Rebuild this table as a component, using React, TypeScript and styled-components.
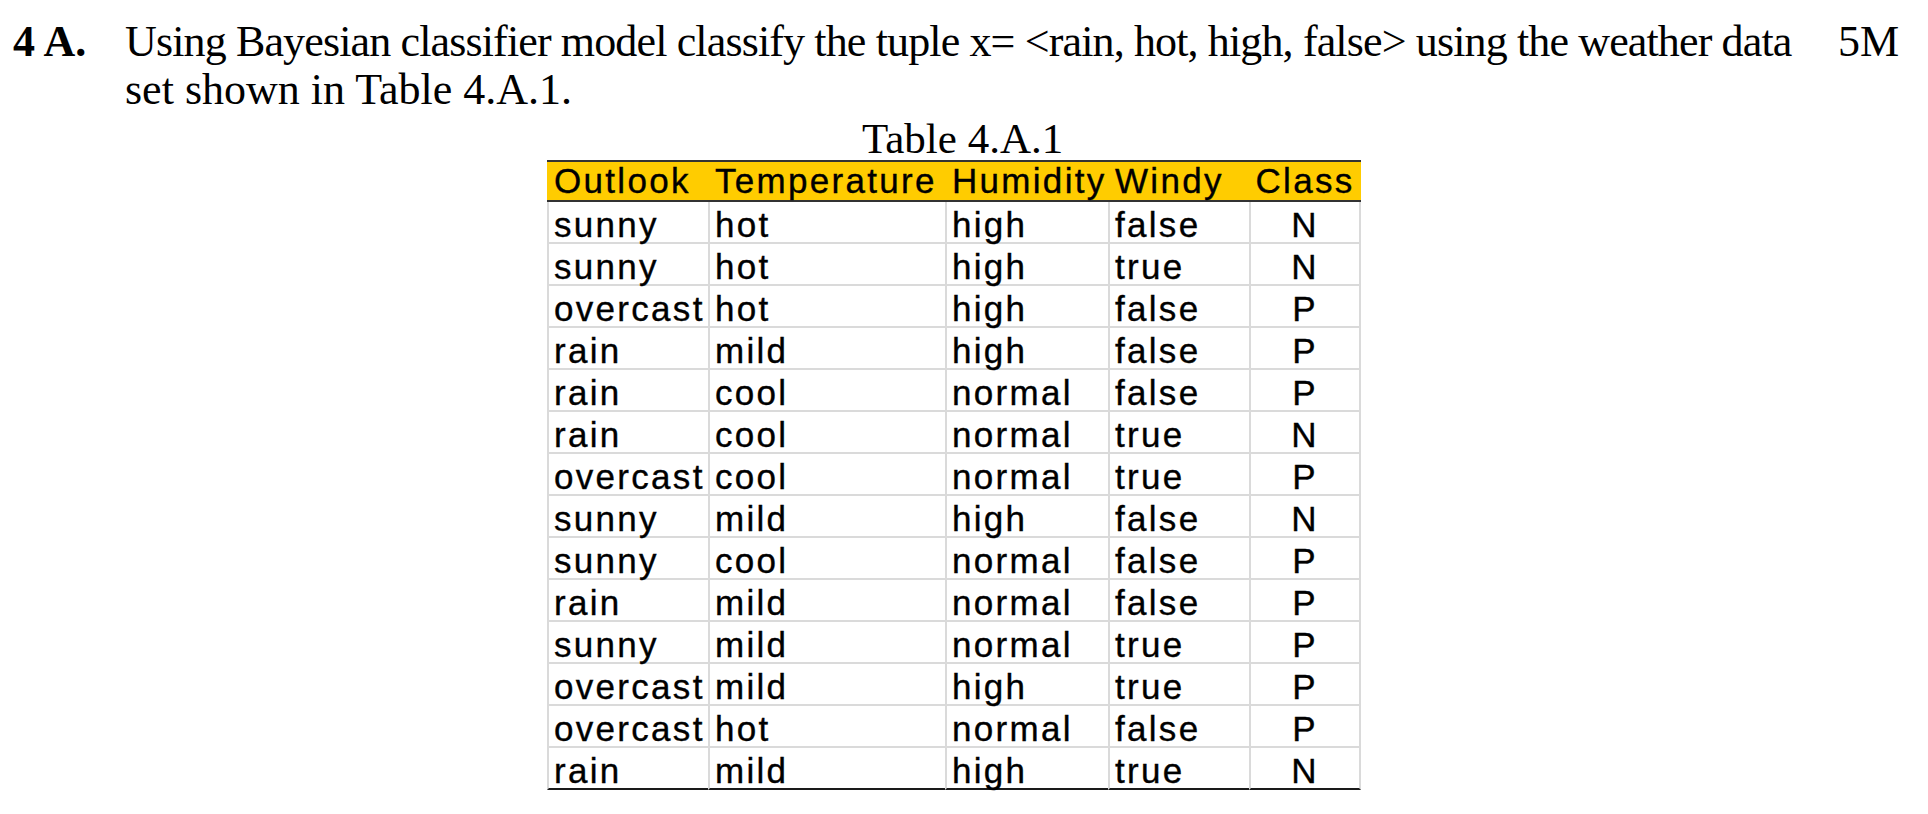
import React from "react";
import styled, { createGlobalStyle } from "styled-components";

const GlobalStyle = createGlobalStyle`
  html, body {
    margin: 0;
    padding: 0;
    background: #ffffff;
  }
`;

const Page = styled.div`
  width: 1928px;
  min-height: 814px;
  background: #ffffff;
  color: #000000;
`;

const Question = styled.div`
  display: flex;
  padding: 18px 0 0 13px;
  font-family: "Liberation Serif", "Times New Roman", serif;
  font-size: 44px;
  line-height: 48px;
`;

const Number = styled.div`
  width: 112px;
  flex-shrink: 0;
  font-weight: bold;
`;

const Body = styled.div`
  width: 1713px;
  flex-shrink: 0;
  white-space: nowrap;
`;

const Line = styled.div<{ $tight?: boolean }>`
  letter-spacing: ${(p) => (p.$tight ? "-0.86px" : "0")};
`;

const Marks = styled.div`
  flex-shrink: 0;
`;

const Figure = styled.div`
  display: flex;
  flex-direction: column;
  padding-left: 547px;
`;

const Caption = styled.div`
  margin-top: 3px;
  padding-left: 315px;
  font-family: "Liberation Serif", "Times New Roman", serif;
  font-size: 43px;
  line-height: 43px;
`;

const Grid = styled.div`
  display: grid;
  grid-template-columns: 161px 237px 163px 141px 112px;
  width: 814px;
  font-family: "Liberation Sans", Arial, sans-serif;
  font-size: 35px;
  letter-spacing: 2.3px;
  white-space: nowrap;
  -webkit-text-stroke: 0.35px #000000;
`;

const HeadCell = styled.div<{ $center?: boolean }>`
  box-sizing: border-box;
  height: 42px;
  padding-left: ${(p) => (p.$center ? "0" : "7px")};
  text-align: ${(p) => (p.$center ? "center" : "left")};
  background: #ffcc00;
  border-top: 2px solid #333333;
  border-bottom: 2px solid #333333;
  line-height: 38px;
`;

const Cell = styled.div<{ $center?: boolean; $last?: boolean; $edge?: boolean }>`
  box-sizing: border-box;
  height: 42px;
  padding: 4px 0 0 ${(p) => (p.$center ? "0" : "5px")};
  text-align: ${(p) => (p.$center ? "center" : "left")};
  border-left: 2px solid #dadada;
  border-right: ${(p) => (p.$edge ? "2px solid #dadada" : "none")};
  border-bottom: 2px solid ${(p) => (p.$last ? "#1a1a1a" : "#dadada")};
  line-height: 37px;
`;

const headers = ["Outlook", "Temperature", "Humidity", "Windy", "Class"];

const rows: string[][] = [
  ["sunny", "hot", "high", "false", "N"],
  ["sunny", "hot", "high", "true", "N"],
  ["overcast", "hot", "high", "false", "P"],
  ["rain", "mild", "high", "false", "P"],
  ["rain", "cool", "normal", "false", "P"],
  ["rain", "cool", "normal", "true", "N"],
  ["overcast", "cool", "normal", "true", "P"],
  ["sunny", "mild", "high", "false", "N"],
  ["sunny", "cool", "normal", "false", "P"],
  ["rain", "mild", "normal", "false", "P"],
  ["sunny", "mild", "normal", "true", "P"],
  ["overcast", "mild", "high", "true", "P"],
  ["overcast", "hot", "normal", "false", "P"],
  ["rain", "mild", "high", "true", "N"],
];

function App() {
  return (
    <Page>
      <GlobalStyle />
      <Question>
        <Number>4 A.</Number>
        <Body>
          <Line $tight>
            Using Bayesian classifier model classify the tuple x= &lt;rain, hot, high, false&gt; using the weather data
          </Line>
          <Line>set shown in Table 4.A.1.</Line>
        </Body>
        <Marks>5M</Marks>
      </Question>
      <Figure>
        <Caption>Table 4.A.1</Caption>
        <Grid>
          {headers.map((h, i) => (
            <HeadCell key={h} $center={i === 4}>
              {h}
            </HeadCell>
          ))}
          {rows.map((row, r) =>
            row.map((value, c) => (
              <Cell
                key={`${r}-${c}`}
                $center={c === 4}
                $edge={c === 4}
                $last={r === rows.length - 1}
              >
                {value}
              </Cell>
            ))
          )}
        </Grid>
      </Figure>
    </Page>
  );
}

export default App;
